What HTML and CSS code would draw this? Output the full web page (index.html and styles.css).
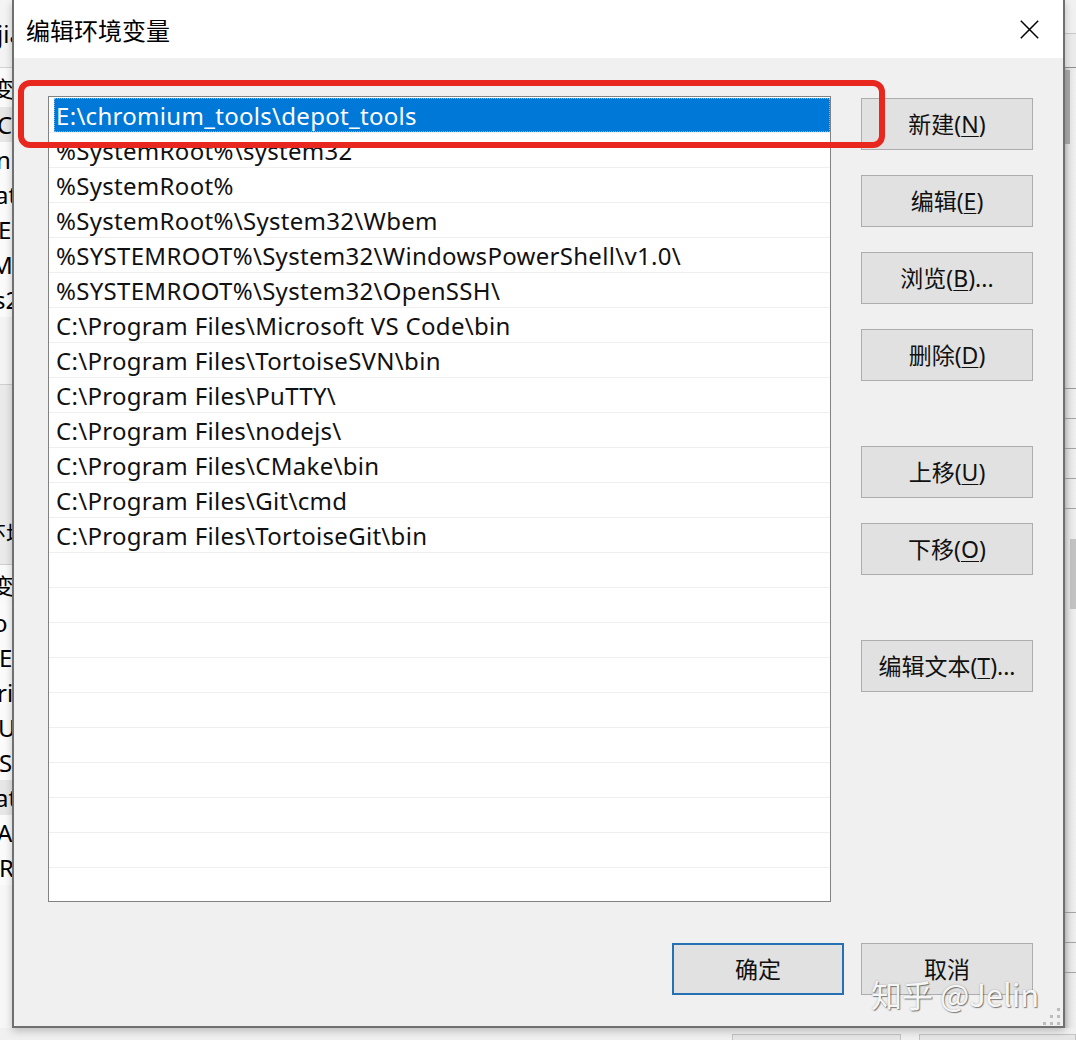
FILE: index.html
```html
<!DOCTYPE html>
<html lang="zh-CN">
<head>
<meta charset="utf-8">
<title>编辑环境变量</title>
<link rel="stylesheet" href="styles.css">
</head>
<body>
<div class="desktop">
  <div class="back-left">
    <div class="bl-top"><span class="frag f-jia">jia</span></div>
    <div class="bl-head"><span class="frag f-cjk">变量</span></div>
    <div class="bl-row hl"><span class="frag f-c">C</span></div>
    <div class="bl-row"><span class="frag f-n">n</span></div>
    <div class="bl-row"><span class="frag f-at">at</span></div>
    <div class="bl-row"><span class="frag f-en">EN</span></div>
    <div class="bl-row"><span class="frag f-m">M</span></div>
    <div class="bl-row"><span class="frag f-s2">s2</span></div>
    <div class="bl-gap"></div>
    <div class="bl-group"><span class="frag f-cjk2">环境</span></div>
    <div class="bl-head2"><span class="frag f-cjk">变量</span></div>
    <div class="bl-row"><span class="frag f-o">o</span></div>
    <div class="bl-row"><span class="frag f-e">E</span></div>
    <div class="bl-row"><span class="frag f-ri">ri</span></div>
    <div class="bl-row"><span class="frag f-u">U</span></div>
    <div class="bl-row"><span class="frag f-s">S</span></div>
    <div class="bl-row hl"><span class="frag f-at">at</span></div>
    <div class="bl-row"><span class="frag f-a">A</span></div>
    <div class="bl-row"><span class="frag f-r">R</span></div>
  </div>

  <div class="dialog">
    <div class="titlebar">
      <span class="title">编辑环境变量</span>
      <svg class="close" viewBox="0 0 19 19" aria-hidden="true"><path d="M0.8 0.8L18.2 18.2M18.2 0.8L0.8 18.2" stroke="#000" stroke-width="1.5" fill="none"/></svg>
    </div>
    <div class="client">
      <div class="main">
        <div class="list">
          <div class="row selected"><span class="cell">E:\chromium_tools\depot_tools</span></div>
          <div class="row"><span class="cell">%SystemRoot%\system32</span></div>
          <div class="row"><span class="cell">%SystemRoot%</span></div>
          <div class="row"><span class="cell">%SystemRoot%\System32\Wbem</span></div>
          <div class="row"><span class="cell">%SYSTEMROOT%\System32\WindowsPowerShell\v1.0\</span></div>
          <div class="row"><span class="cell">%SYSTEMROOT%\System32\OpenSSH\</span></div>
          <div class="row"><span class="cell">C:\Program Files\Microsoft VS Code\bin</span></div>
          <div class="row"><span class="cell">C:\Program Files\TortoiseSVN\bin</span></div>
          <div class="row"><span class="cell">C:\Program Files\PuTTY\</span></div>
          <div class="row"><span class="cell">C:\Program Files\nodejs\</span></div>
          <div class="row"><span class="cell">C:\Program Files\CMake\bin</span></div>
          <div class="row"><span class="cell">C:\Program Files\Git\cmd</span></div>
          <div class="row"><span class="cell">C:\Program Files\TortoiseGit\bin</span></div>
          <div class="row"><span class="cell"></span></div>
          <div class="row"><span class="cell"></span></div>
          <div class="row"><span class="cell"></span></div>
          <div class="row"><span class="cell"></span></div>
          <div class="row"><span class="cell"></span></div>
          <div class="row"><span class="cell"></span></div>
          <div class="row"><span class="cell"></span></div>
          <div class="row"><span class="cell"></span></div>
          <div class="row"><span class="cell"></span></div>
          <div class="row"><span class="cell"></span></div>
        </div>
        <div class="side">
          <div class="group">
            <div class="btn">新建(<u>N</u>)</div>
            <div class="btn">编辑(<u>E</u>)</div>
            <div class="btn">浏览(<u>B</u>)...</div>
            <div class="btn">删除(<u>D</u>)</div>
          </div>
          <div class="group">
            <div class="btn">上移(<u>U</u>)</div>
            <div class="btn">下移(<u>O</u>)</div>
          </div>
          <div class="group">
            <div class="btn">编辑文本(<u>T</u>)...</div>
          </div>
        </div>
      </div>
      <div class="footer">
        <div class="btn default">确定</div>
        <div class="btn">取消</div>
      </div>
    </div>
    <div class="annot"></div>
    <div class="watermark">知乎 @Jelin</div>
    <svg class="grip" viewBox="0 0 18 18" aria-hidden="true">
      <rect x="15" y="1" width="3" height="3"/>
      <rect x="8" y="8" width="3" height="3"/>
      <rect x="15" y="8" width="3" height="3"/>
      <rect x="1" y="15" width="3" height="3"/>
      <rect x="8" y="15" width="3" height="3"/>
      <rect x="15" y="15" width="3" height="3"/>
    </svg>
  </div>

  <div class="back-right">
    <div class="br-a"></div>
    <div class="br-b"></div>
    <div class="br-track"><div class="br-thumb"></div></div>
    <div class="br-r"></div>
    <div class="br-r"></div>
    <div class="br-r"></div>
    <div class="br-r"></div>
    <div class="br-track2"><div class="br-thumb2"></div></div>
    <div class="br-r"></div>
    <div class="br-r"></div>
  </div>

  <div class="back-bottom">
    <div class="bb-btn wide"></div>
    <div class="bb-btn"></div>
  </div>
</div>
</body>
</html>
```

FILE: styles.css
```css
* { box-sizing: border-box; }

html, body {
  margin: 0;
  padding: 0;
}

body {
  background: #f0f0f0;
  font-family: "Noto Sans", "Noto Sans CJK SC", sans-serif;
  color: #000;
}

.desktop {
  display: grid;
  grid-template-columns: 12px 1053px 11px;
  grid-template-rows: 1028px 12px;
  width: 1076px;
  height: 1040px;
  overflow: hidden;
}

/* ---------- background window (left strip) ---------- */
.back-left {
  grid-row: 1 / 3;
  grid-column: 1;
  display: flex;
  flex-direction: column;
  background: #f7f7f7;
  overflow: hidden;
  font-size: 24px;
}

.frag {
  display: block;
  white-space: nowrap;
  line-height: 35px;
}

.bl-top { height: 68px; padding-top: 16px; border-bottom: 1px solid #d4d4d4; background: #f4f4f4; }
.bl-head { height: 39px; padding-top: 2px; background: #fafafa; }
.bl-head2 { height: 40px; padding-top: 2px; background: #fafafa; }
.bl-row { height: 35px; background: #fbfbfb; }
.bl-row.hl { background: #e7e7e7; }
.bl-gap { height: 68px; border-bottom: 1px solid #cfcfcf; background: #f4f4f4; }
.bl-group { height: 180px; padding-top: 130px; background: #eaeaea; border-bottom: 1px solid #cfcfcf; }

.f-jia { margin-left: -3px; }
.f-cjk { margin-left: -8px; font-family: "Noto Sans CJK SC", sans-serif; font-size: 22px; }
.f-cjk2 { margin-left: -16px; font-family: "Noto Sans CJK SC", sans-serif; font-size: 22px; }
.f-c { margin-left: -3px; }
.f-n { margin-left: -4px; }
.f-at { margin-left: -5px; }
.f-en { margin-left: -2px; }
.f-m { margin-left: -9px; }
.f-s2 { margin-left: -6px; }
.f-o { margin-left: -7px; }
.f-e { margin-left: -1px; }
.f-ri { margin-left: -3px; }
.f-u { margin-left: -2px; }
.f-s { margin-left: -1px; }
.f-a { margin-left: -3px; }
.f-r { margin-left: -1px; }

/* ---------- background window (right strip) ---------- */
.back-right {
  grid-row: 1 / 3;
  grid-column: 3;
  display: flex;
  flex-direction: column;
  background: linear-gradient(90deg, #cfcfcf, #e6e6e6 40%, #efefef);
}

.br-a { height: 34px; background: #f1f1f1; border-bottom: 1px solid #c9c9c9; }
.br-b { height: 34px; background: #ebebeb; border-bottom: 1px solid #8f8f8f; }
.br-track { height: 321px; border-bottom: 1px solid #9a9a9a; padding-top: 2px; }
.br-thumb { width: 5px; height: 74px; background: #a9a9a9; }
.br-r { height: 30px; border-bottom: 1px solid #a4a4a4; }
.br-track2 { height: 404px; padding-top: 30px; border-bottom: 1px solid #a4a4a4; }
.br-thumb2 { margin-left: 5px; width: 6px; height: 70px; background: #c2c2c2; }

/* ---------- background window (bottom strip) ---------- */
.back-bottom {
  grid-row: 2;
  grid-column: 1 / 4;
  display: flex;
  gap: 18px;
  padding: 6px 0 0 732px;
  background: #f0f0f0;
}

.bb-btn {
  width: 160px;
  height: 10px;
  border: 1px solid #c4c4c4;
  border-bottom: 0;
  background: #e6e6e6;
}

.bb-btn.wide { width: 172px; }

/* ---------- dialog ---------- */
.dialog {
  grid-row: 1;
  grid-column: 2;
  position: relative;
  z-index: 1;
  display: flex;
  flex-direction: column;
  background: #f0f0f0;
  border: 2px solid #707070;
  border-top: 0;
  box-shadow: 0 3px 8px rgba(0, 0, 0, 0.22);
}

.titlebar {
  flex: none;
  height: 58px;
  background: #fff;
  display: flex;
  align-items: center;
  justify-content: space-between;
  padding: 0 24px 0 12px;
}

.title {
  font-family: "Noto Sans CJK SC", sans-serif;
  font-size: 24px;
  line-height: 1;
  padding-top: 2px;
}

.close {
  width: 19px;
  height: 19px;
  margin-top: 1px;
}

.client {
  flex: 1;
  display: flex;
  flex-direction: column;
  padding: 38px 30px 31px 34px;
}

.main {
  display: flex;
  gap: 30px;
}

.list {
  width: 783px;
  height: 806px;
  border: 1px solid #828282;
  background: #fff;
  padding-top: 1px;
  overflow: hidden;
}

.row {
  display: flex;
  height: 35px;
  border-bottom: 1px solid #efefef;
}

.cell {
  flex: 1;
  margin-left: 5px;
  padding-left: 2px;
  font-size: 24px;
  letter-spacing: 0.3px;
  line-height: 35px;
  white-space: nowrap;
  color: #111;
}

.row.selected .cell {
  background: #0078d7;
  color: #fff;
  outline: 1px dotted #7fb7e6;
  outline-offset: -1px;
}

.side {
  display: flex;
  flex-direction: column;
  padding-top: 2px;
}

.group {
  display: flex;
  flex-direction: column;
  gap: 25px;
}

.group + .group {
  margin-top: 65px;
}

.btn {
  width: 172px;
  height: 52px;
  background: #e1e1e1;
  border: 1px solid #adadad;
  display: flex;
  align-items: center;
  justify-content: center;
  font-size: 23px;
  line-height: 1;
  white-space: nowrap;
  color: #111;
}

.btn u {
  text-underline-offset: 3px;
  text-decoration-thickness: 1px;
}

.btn.default {
  border: 2px solid #2671b4;
}

.footer {
  margin-top: 41px;
  display: flex;
  justify-content: flex-end;
  gap: 17px;
}

/* ---------- overlays ---------- */
.annot {
  position: absolute;
  left: 4px;
  top: 80px;
  width: 867px;
  height: 68px;
  border: 6px solid #e8271f;
  border-radius: 12px;
  pointer-events: none;
}

.watermark {
  position: absolute;
  left: 857px;
  top: 975px;
  font-family: "Noto Sans CJK SC", sans-serif;
  font-size: 31px;
  line-height: 38px;
  color: #f6f6f6;
  text-shadow: 1px 1px 1px rgba(0, 0, 0, 0.45), 0 0 2px rgba(0, 0, 0, 0.25);
  white-space: nowrap;
  pointer-events: none;
}

.grip {
  position: absolute;
  right: 3px;
  bottom: 1px;
  width: 18px;
  height: 18px;
  fill: #bcbcbc;
}
```
